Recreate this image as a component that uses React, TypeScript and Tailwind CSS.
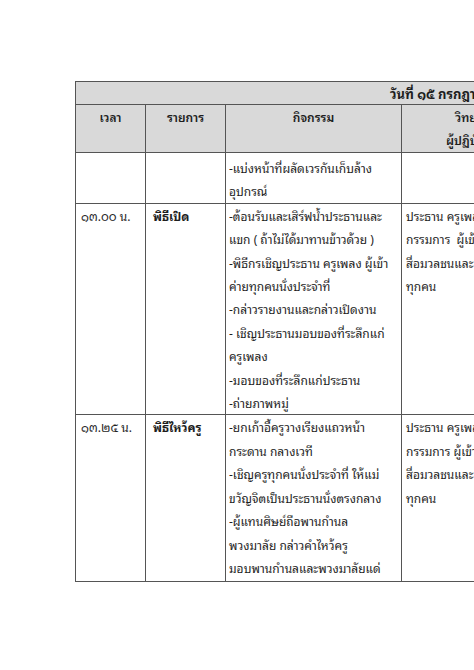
// Schedule table page: day header, column heads, three activity rows.

const font = { fontFamily: '"Noto Sans Thai Looped", "Noto Sans Thai", Tahoma, sans-serif' }

type Row = {
  time: string
  item: string
  activity: string[]
  staff: string[]
  h: string
}

const rows: Row[] = [
  {
    time: '',
    item: '',
    activity: ['-แบ่งหน้าที่ผลัดเวรกันเก็บล้าง', 'อุปกรณ์'],
    staff: [],
    h: 'h-[51px]',
  },
  {
    time: '๑๓.๐๐ น.',
    item: 'พิธีเปิด',
    activity: [
      '-ต้อนรับและเสิร์ฟน้ำประธานและ',
      'แขก ( ถ้าไม่ได้มาทานข้าวด้วย )',
      '-พิธีกรเชิญประธาน ครูเพลง ผู้เข้า',
      'ค่ายทุกคนนั่งประจำที่',
      '-กล่าวรายงานและกล่าวเปิดงาน',
      '- เชิญประธานมอบของที่ระลึกแก่',
      'ครูเพลง',
      '-มอบของที่ระลึกแก่ประธาน',
      '-ถ่ายภาพหมู่',
    ],
    staff: ['ประธาน ครูเพลง', 'กรรมการ  ผู้เข้าค่าย', 'สื่อมวลชนและแขก', 'ทุกคน'],
    h: 'h-[211px]',
  },
  {
    time: '๑๓.๒๕ น.',
    item: 'พิธีไหว้ครู',
    activity: [
      '-ยกเก้าอี้ครูวางเรียงแถวหน้า',
      'กระดาน กลางเวที',
      '-เชิญครูทุกคนนั่งประจำที่ ให้แม่',
      'ขวัญจิตเป็นประธานนั่งตรงกลาง',
      '-ผู้แทนศิษย์ถือพานกำนล',
      'พวงมาลัย กล่าวคำไหว้ครู',
      'มอบพานกำนลและพวงมาลัยแด่',
    ],
    staff: ['ประธาน ครูเพลง', 'กรรมการ ผู้เข้าค่าย', 'สื่อมวลชนและแขก', 'ทุกคน'],
    h: 'h-[167px]',
  },
]

function Lines({ lines }: { lines: string[] }) {
  return (
    <>
      {lines.map((l, i) => (
        <div key={i} className="whitespace-pre">
          {l}
        </div>
      ))}
    </>
  )
}

export default function App() {
  return (
    <div className="min-h-[670px] w-full overflow-hidden bg-white pl-[75px] pt-[81px] text-[12px] leading-[23.4px] text-[#1e1e1e]" style={font}>
      <table className="w-[772px] table-fixed border-collapse">
        <colgroup>
          <col className="w-[70px]" />
          <col className="w-[80px]" />
          <col className="w-[176px]" />
          <col className="w-[148px]" />
          <col className="w-[298px]" />
        </colgroup>
        <thead>
          <tr className="h-[23px] bg-[#d9d9d9]">
            <th colSpan={5} className="border border-[#555] text-center text-[13px] font-bold leading-[21px]">
              วันที่ ๑๕ กรกฎาคม ๒๕๕๘
            </th>
          </tr>
          <tr className="h-[46px] bg-[#d9d9d9] align-top">
            <th className="border border-[#555] text-center font-semibold">เวลา</th>
            <th className="border border-[#555] text-center font-semibold">รายการ</th>
            <th className="border border-[#555] text-center font-semibold">กิจกรรม</th>
            <th className="border border-[#555] text-center font-semibold">
              <div>วิทยากร</div>
              <div>ผู้ปฏิบัติงาน</div>
            </th>
            <th className="border border-[#555] text-center font-semibold">หมายเหตุ</th>
          </tr>
        </thead>
        <tbody>
          {rows.map((r, i) => (
            <tr key={i} className={`${r.h} align-top`}>
              <td className={`border border-[#555] pl-[5px] ${i === 0 ? 'pt-[3px]' : ''}`}>{r.time}</td>
              <td className="border border-[#555] pl-[7px] font-bold">{r.item}</td>
              <td className={`border border-[#555] pl-[3px] ${i === 0 ? 'pt-[3px]' : ''}`}>
                <Lines lines={r.activity} />
              </td>
              <td className="border border-[#555] pl-[4px]">
                <Lines lines={r.staff} />
              </td>
              <td className="border border-[#555]" />
            </tr>
          ))}
        </tbody>
      </table>
    </div>
  )
}
